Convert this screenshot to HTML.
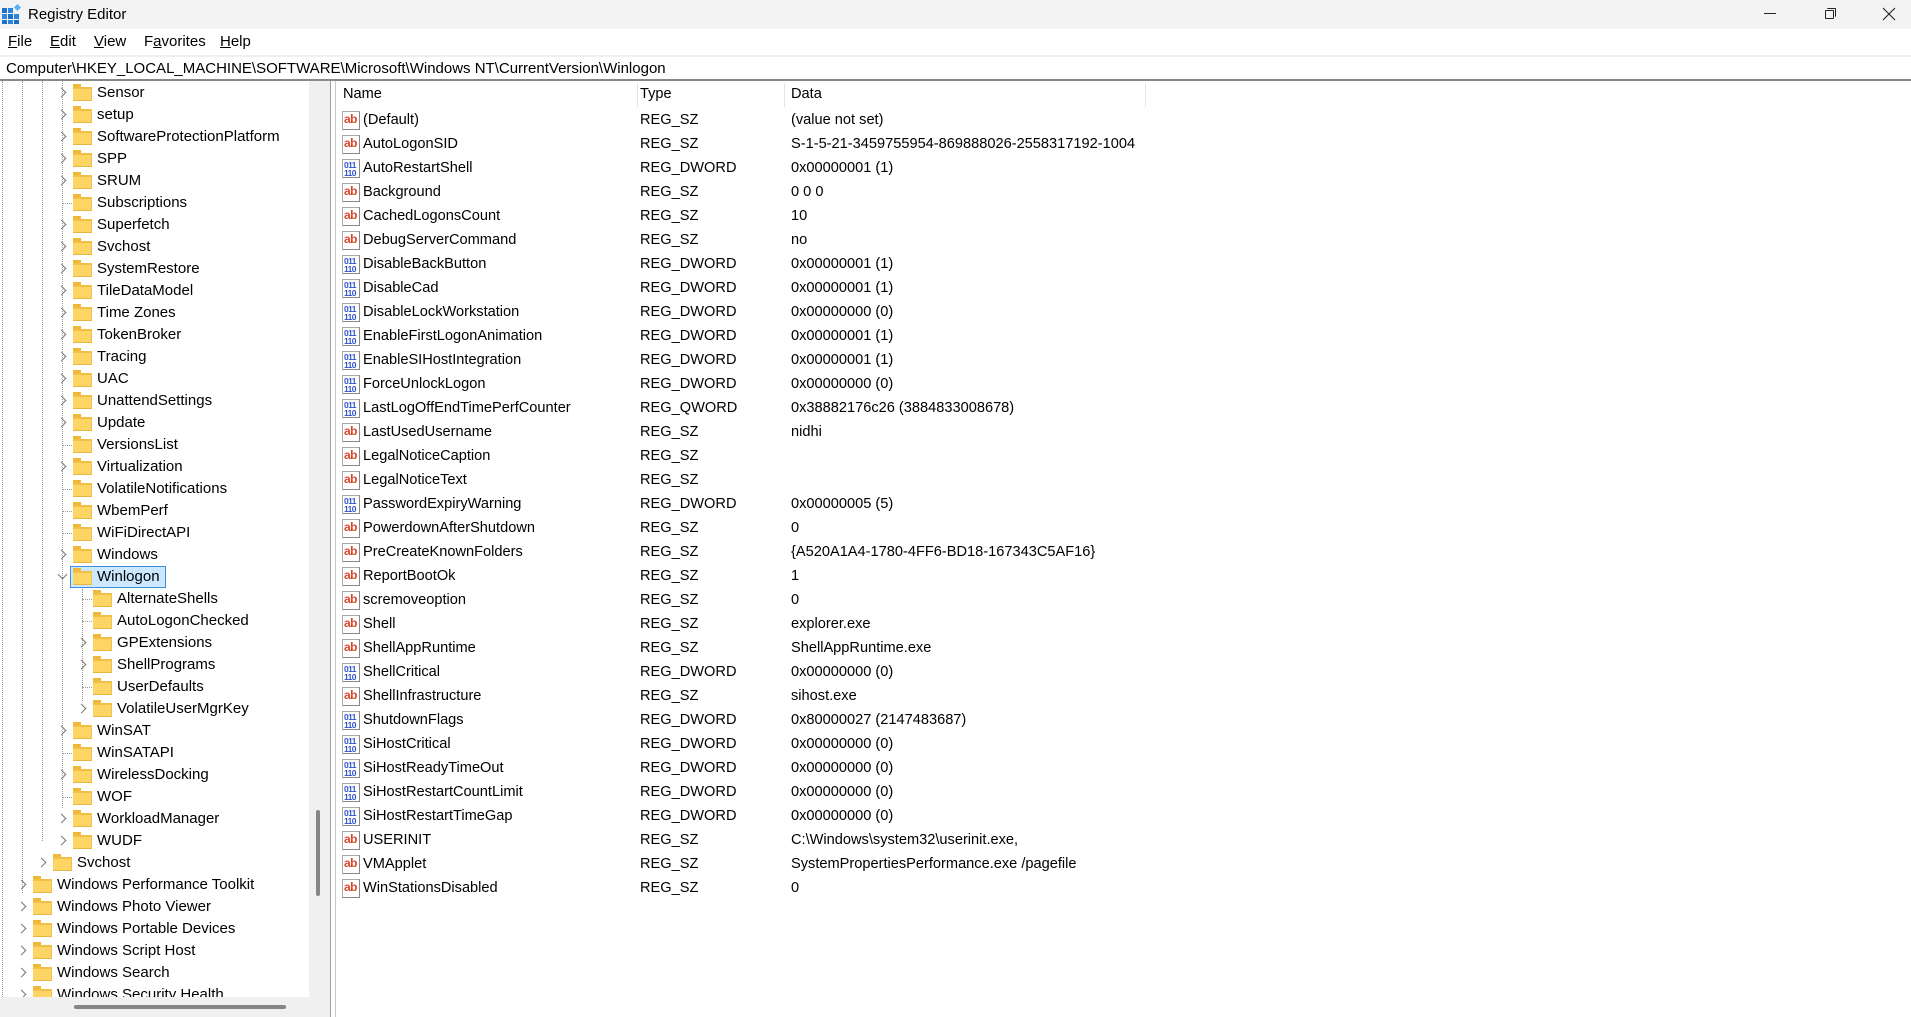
<!DOCTYPE html>
<html><head><meta charset="utf-8"><style>
*{margin:0;padding:0;box-sizing:border-box}
body{width:1911px;height:1017px;overflow:hidden;background:#fff;font-family:"Liberation Sans",sans-serif;font-size:14.6px;color:#000;position:relative}
.abs{position:absolute}
#title{left:0;top:0;width:1911px;height:29px;background:#f3f3f3}
#menu{left:0;top:29px;width:1911px;height:24px;background:#fff}
#menu span{position:absolute;top:4px;font-size:15px}
#addr{left:0;top:55px;width:1911px;height:24px;background:#fff;border-top:2px solid #f0f0f0}
#addrline{left:0;top:79px;width:1911px;height:2px;background:#888}
#tree{left:0;top:81px;width:309px;height:916px;overflow:hidden;background:#fff;font-size:15px}
.t{position:absolute;left:0;height:22px;width:400px;line-height:22px}
.t .c{position:absolute;left:calc(var(--l) - 4px);top:7px;width:7px;height:7px;border-right:1.3px solid #777;border-top:1.3px solid #777;transform:rotate(45deg)}
.t .c.o{transform:rotate(135deg);top:5px;left:calc(var(--l) - 3px)}
.t .d{position:absolute;left:var(--l);top:11px;width:10px;border-top:1px dotted #999}
.t .f{position:absolute;left:calc(var(--l) + 11px);top:5px;width:19px;height:14px;background:#fcd565;border-bottom:1px solid #e9b640;border-right:1px solid #eec055}
.t .f:before{content:"";position:absolute;left:0;top:-3px;width:8px;height:3px;background:#efb838}
.t .f:after{content:"";position:absolute;left:0;top:0;width:18px;height:2px;background:#f2bf45}
.t span{position:absolute;left:calc(var(--l) + 35px);top:0;white-space:nowrap}
.v{position:absolute;width:0;border-left:1px dotted #999}
.sel{position:absolute;left:70px;width:96px;height:22px;background:#cce8ff;border:1px solid #3d8fdb}
#vtrack{left:309px;top:81px;width:21px;height:936px;background:#f0f0f0}
#vthumb{left:316px;top:810px;width:4px;height:86px;background:#858585;border-radius:2px}
#htrack{left:0;top:997px;width:309px;height:20px;background:#f0f0f0}
#hthumb{left:74px;top:1005px;width:212px;height:4px;background:#858585;border-radius:2px}
#split1{left:330px;top:81px;width:1px;height:936px;background:#a0a0a0}
#split2{left:335px;top:81px;width:1px;height:936px;background:#c8c8c8}
.hd{position:absolute;top:86px}
.cd{position:absolute;top:83px;width:1px;height:24px;background:#e5e5e5}
.r{position:absolute;left:0;height:24px;width:1600px;line-height:24px;white-space:nowrap}
.r .n{position:absolute;left:363px}
.r .y{position:absolute;left:640px}
.r .a{position:absolute;left:791px}
.ic{position:absolute;left:342px;top:3px;width:18px;height:19px;border:1px solid #aaa;border-right-color:#888;border-bottom-color:#888;background:#fff;overflow:hidden;font-style:normal}
.ab:after{content:"ab";position:absolute;left:1px;top:-5px;font-size:12px;font-weight:bold;color:#d9452b;letter-spacing:-0.5px}
.bn b{position:absolute;left:1px;font-size:8.5px;line-height:8px;font-weight:bold;color:#2e56c7;letter-spacing:-0.6px}
</style></head><body>
<div id="title" class="abs">
<svg class="abs" style="left:2px;top:4px" width="20" height="20" viewBox="0 0 20 20"><rect x="0" y="4" width="5" height="5" fill="#1f6fc8"/><rect x="6" y="4" width="5" height="5" fill="#2b86e0"/><rect x="0" y="10" width="5" height="5" fill="#2b86e0"/><rect x="6" y="10" width="5" height="5" fill="#1f6fc8"/><rect x="12" y="10" width="5" height="5" fill="#2b86e0"/><rect x="0" y="16" width="5" height="4" fill="#1f6fc8"/><rect x="6" y="16" width="5" height="4" fill="#2b86e0"/><rect x="12" y="16" width="5" height="4" fill="#1f6fc8"/><rect x="13" y="1" width="5" height="5" fill="#5fb0f0" transform="rotate(45 15.5 3.5)"/></svg>
<span class="abs" style="left:28px;top:6px;font-size:15px">Registry Editor</span>
<div class="abs" style="left:1764px;top:13px;width:12px;height:1px;background:#222"></div>
<div class="abs" style="left:1825px;top:10px;width:9px;height:9px;border:1px solid #222;border-radius:1px"></div>
<div class="abs" style="left:1827px;top:8px;width:9px;height:9px;border-top:1px solid #222;border-right:1px solid #222;border-radius:1px"></div>
<svg class="abs" style="left:1882px;top:7px" width="14" height="14"><path d="M1 1L13 13M13 1L1 13" stroke="#222" stroke-width="1.1"/></svg>
</div>
<div id="menu" class="abs">
<span style="left:8px"><u>F</u>ile</span><span style="left:50px"><u>E</u>dit</span><span style="left:94px"><u>V</u>iew</span><span style="left:144px">F<u>a</u>vorites</span><span style="left:220px"><u>H</u>elp</span>
</div>
<div id="addr" class="abs"><span class="abs" style="left:6px;top:3px;font-size:15px">Computer\HKEY_LOCAL_MACHINE\SOFTWARE\Microsoft\Windows NT\CurrentVersion\Winlogon</span></div>
<div id="addrline" class="abs"></div>

<div id="tree" class="abs">
<div class="v" style="left:2px;top:0;height:916px"></div>
<div class="v" style="left:22px;top:0;height:812px"></div>
<div class="v" style="left:42px;top:0;height:760px"></div>
<div class="v" style="left:62px;top:0;height:727px"></div>
<div class="v" style="left:82px;top:508px;height:112px"></div>
<div class="sel" style="top:485px"></div>
<div class="t" style="top:1px;--l:62px"><i class="c"></i><b class="f"></b><span>Sensor</span></div>
<div class="t" style="top:23px;--l:62px"><i class="c"></i><b class="f"></b><span>setup</span></div>
<div class="t" style="top:45px;--l:62px"><i class="c"></i><b class="f"></b><span>SoftwareProtectionPlatform</span></div>
<div class="t" style="top:67px;--l:62px"><i class="c"></i><b class="f"></b><span>SPP</span></div>
<div class="t" style="top:89px;--l:62px"><i class="c"></i><b class="f"></b><span>SRUM</span></div>
<div class="t" style="top:111px;--l:62px"><i class="d"></i><b class="f"></b><span>Subscriptions</span></div>
<div class="t" style="top:133px;--l:62px"><i class="c"></i><b class="f"></b><span>Superfetch</span></div>
<div class="t" style="top:155px;--l:62px"><i class="c"></i><b class="f"></b><span>Svchost</span></div>
<div class="t" style="top:177px;--l:62px"><i class="c"></i><b class="f"></b><span>SystemRestore</span></div>
<div class="t" style="top:199px;--l:62px"><i class="c"></i><b class="f"></b><span>TileDataModel</span></div>
<div class="t" style="top:221px;--l:62px"><i class="c"></i><b class="f"></b><span>Time Zones</span></div>
<div class="t" style="top:243px;--l:62px"><i class="c"></i><b class="f"></b><span>TokenBroker</span></div>
<div class="t" style="top:265px;--l:62px"><i class="c"></i><b class="f"></b><span>Tracing</span></div>
<div class="t" style="top:287px;--l:62px"><i class="c"></i><b class="f"></b><span>UAC</span></div>
<div class="t" style="top:309px;--l:62px"><i class="c"></i><b class="f"></b><span>UnattendSettings</span></div>
<div class="t" style="top:331px;--l:62px"><i class="c"></i><b class="f"></b><span>Update</span></div>
<div class="t" style="top:353px;--l:62px"><i class="d"></i><b class="f"></b><span>VersionsList</span></div>
<div class="t" style="top:375px;--l:62px"><i class="c"></i><b class="f"></b><span>Virtualization</span></div>
<div class="t" style="top:397px;--l:62px"><i class="d"></i><b class="f"></b><span>VolatileNotifications</span></div>
<div class="t" style="top:419px;--l:62px"><i class="d"></i><b class="f"></b><span>WbemPerf</span></div>
<div class="t" style="top:441px;--l:62px"><i class="d"></i><b class="f"></b><span>WiFiDirectAPI</span></div>
<div class="t" style="top:463px;--l:62px"><i class="c"></i><b class="f"></b><span>Windows</span></div>
<div class="t" style="top:485px;--l:62px"><i class="c o"></i><b class="f"></b><span>Winlogon</span></div>
<div class="t" style="top:507px;--l:82px"><i class="d"></i><b class="f"></b><span>AlternateShells</span></div>
<div class="t" style="top:529px;--l:82px"><i class="d"></i><b class="f"></b><span>AutoLogonChecked</span></div>
<div class="t" style="top:551px;--l:82px"><i class="c"></i><b class="f"></b><span>GPExtensions</span></div>
<div class="t" style="top:573px;--l:82px"><i class="c"></i><b class="f"></b><span>ShellPrograms</span></div>
<div class="t" style="top:595px;--l:82px"><i class="d"></i><b class="f"></b><span>UserDefaults</span></div>
<div class="t" style="top:617px;--l:82px"><i class="c"></i><b class="f"></b><span>VolatileUserMgrKey</span></div>
<div class="t" style="top:639px;--l:62px"><i class="c"></i><b class="f"></b><span>WinSAT</span></div>
<div class="t" style="top:661px;--l:62px"><i class="d"></i><b class="f"></b><span>WinSATAPI</span></div>
<div class="t" style="top:683px;--l:62px"><i class="c"></i><b class="f"></b><span>WirelessDocking</span></div>
<div class="t" style="top:705px;--l:62px"><i class="d"></i><b class="f"></b><span>WOF</span></div>
<div class="t" style="top:727px;--l:62px"><i class="c"></i><b class="f"></b><span>WorkloadManager</span></div>
<div class="t" style="top:749px;--l:62px"><i class="c"></i><b class="f"></b><span>WUDF</span></div>
<div class="t" style="top:771px;--l:42px"><i class="c"></i><b class="f"></b><span>Svchost</span></div>
<div class="t" style="top:793px;--l:22px"><i class="c"></i><b class="f"></b><span>Windows Performance Toolkit</span></div>
<div class="t" style="top:815px;--l:22px"><i class="c"></i><b class="f"></b><span>Windows Photo Viewer</span></div>
<div class="t" style="top:837px;--l:22px"><i class="c"></i><b class="f"></b><span>Windows Portable Devices</span></div>
<div class="t" style="top:859px;--l:22px"><i class="c"></i><b class="f"></b><span>Windows Script Host</span></div>
<div class="t" style="top:881px;--l:22px"><i class="c"></i><b class="f"></b><span>Windows Search</span></div>
<div class="t" style="top:903px;--l:22px"><i class="c"></i><b class="f"></b><span>Windows Security Health</span></div>
</div>
<div id="vtrack" class="abs"></div><div id="vthumb" class="abs"></div>
<div id="htrack" class="abs"></div><div id="hthumb" class="abs"></div>
<div id="split1" class="abs"></div><div id="split2" class="abs"></div>

<span class="hd" style="left:343px">Name</span><span class="hd" style="left:640px">Type</span><span class="hd" style="left:791px">Data</span>
<div class="cd" style="left:637px"></div><div class="cd" style="left:784px"></div><div class="cd" style="left:1145px"></div>

<div class="r" style="top:108px"><i class="ic ab"></i><span class="n">(Default)</span><span class="y">REG_SZ</span><span class="a">(value not set)</span></div>
<div class="r" style="top:132px"><i class="ic ab"></i><span class="n">AutoLogonSID</span><span class="y">REG_SZ</span><span class="a">S-1-5-21-3459755954-869888026-2558317192-1004</span></div>
<div class="r" style="top:156px"><i class="ic bn"><b style="top:1px">011</b><b style="top:9px">110</b></i><span class="n">AutoRestartShell</span><span class="y">REG_DWORD</span><span class="a">0x00000001 (1)</span></div>
<div class="r" style="top:180px"><i class="ic ab"></i><span class="n">Background</span><span class="y">REG_SZ</span><span class="a">0 0 0</span></div>
<div class="r" style="top:204px"><i class="ic ab"></i><span class="n">CachedLogonsCount</span><span class="y">REG_SZ</span><span class="a">10</span></div>
<div class="r" style="top:228px"><i class="ic ab"></i><span class="n">DebugServerCommand</span><span class="y">REG_SZ</span><span class="a">no</span></div>
<div class="r" style="top:252px"><i class="ic bn"><b style="top:1px">011</b><b style="top:9px">110</b></i><span class="n">DisableBackButton</span><span class="y">REG_DWORD</span><span class="a">0x00000001 (1)</span></div>
<div class="r" style="top:276px"><i class="ic bn"><b style="top:1px">011</b><b style="top:9px">110</b></i><span class="n">DisableCad</span><span class="y">REG_DWORD</span><span class="a">0x00000001 (1)</span></div>
<div class="r" style="top:300px"><i class="ic bn"><b style="top:1px">011</b><b style="top:9px">110</b></i><span class="n">DisableLockWorkstation</span><span class="y">REG_DWORD</span><span class="a">0x00000000 (0)</span></div>
<div class="r" style="top:324px"><i class="ic bn"><b style="top:1px">011</b><b style="top:9px">110</b></i><span class="n">EnableFirstLogonAnimation</span><span class="y">REG_DWORD</span><span class="a">0x00000001 (1)</span></div>
<div class="r" style="top:348px"><i class="ic bn"><b style="top:1px">011</b><b style="top:9px">110</b></i><span class="n">EnableSIHostIntegration</span><span class="y">REG_DWORD</span><span class="a">0x00000001 (1)</span></div>
<div class="r" style="top:372px"><i class="ic bn"><b style="top:1px">011</b><b style="top:9px">110</b></i><span class="n">ForceUnlockLogon</span><span class="y">REG_DWORD</span><span class="a">0x00000000 (0)</span></div>
<div class="r" style="top:396px"><i class="ic bn"><b style="top:1px">011</b><b style="top:9px">110</b></i><span class="n">LastLogOffEndTimePerfCounter</span><span class="y">REG_QWORD</span><span class="a">0x38882176c26 (3884833008678)</span></div>
<div class="r" style="top:420px"><i class="ic ab"></i><span class="n">LastUsedUsername</span><span class="y">REG_SZ</span><span class="a">nidhi</span></div>
<div class="r" style="top:444px"><i class="ic ab"></i><span class="n">LegalNoticeCaption</span><span class="y">REG_SZ</span><span class="a"></span></div>
<div class="r" style="top:468px"><i class="ic ab"></i><span class="n">LegalNoticeText</span><span class="y">REG_SZ</span><span class="a"></span></div>
<div class="r" style="top:492px"><i class="ic bn"><b style="top:1px">011</b><b style="top:9px">110</b></i><span class="n">PasswordExpiryWarning</span><span class="y">REG_DWORD</span><span class="a">0x00000005 (5)</span></div>
<div class="r" style="top:516px"><i class="ic ab"></i><span class="n">PowerdownAfterShutdown</span><span class="y">REG_SZ</span><span class="a">0</span></div>
<div class="r" style="top:540px"><i class="ic ab"></i><span class="n">PreCreateKnownFolders</span><span class="y">REG_SZ</span><span class="a">{A520A1A4-1780-4FF6-BD18-167343C5AF16}</span></div>
<div class="r" style="top:564px"><i class="ic ab"></i><span class="n">ReportBootOk</span><span class="y">REG_SZ</span><span class="a">1</span></div>
<div class="r" style="top:588px"><i class="ic ab"></i><span class="n">scremoveoption</span><span class="y">REG_SZ</span><span class="a">0</span></div>
<div class="r" style="top:612px"><i class="ic ab"></i><span class="n">Shell</span><span class="y">REG_SZ</span><span class="a">explorer.exe</span></div>
<div class="r" style="top:636px"><i class="ic ab"></i><span class="n">ShellAppRuntime</span><span class="y">REG_SZ</span><span class="a">ShellAppRuntime.exe</span></div>
<div class="r" style="top:660px"><i class="ic bn"><b style="top:1px">011</b><b style="top:9px">110</b></i><span class="n">ShellCritical</span><span class="y">REG_DWORD</span><span class="a">0x00000000 (0)</span></div>
<div class="r" style="top:684px"><i class="ic ab"></i><span class="n">ShellInfrastructure</span><span class="y">REG_SZ</span><span class="a">sihost.exe</span></div>
<div class="r" style="top:708px"><i class="ic bn"><b style="top:1px">011</b><b style="top:9px">110</b></i><span class="n">ShutdownFlags</span><span class="y">REG_DWORD</span><span class="a">0x80000027 (2147483687)</span></div>
<div class="r" style="top:732px"><i class="ic bn"><b style="top:1px">011</b><b style="top:9px">110</b></i><span class="n">SiHostCritical</span><span class="y">REG_DWORD</span><span class="a">0x00000000 (0)</span></div>
<div class="r" style="top:756px"><i class="ic bn"><b style="top:1px">011</b><b style="top:9px">110</b></i><span class="n">SiHostReadyTimeOut</span><span class="y">REG_DWORD</span><span class="a">0x00000000 (0)</span></div>
<div class="r" style="top:780px"><i class="ic bn"><b style="top:1px">011</b><b style="top:9px">110</b></i><span class="n">SiHostRestartCountLimit</span><span class="y">REG_DWORD</span><span class="a">0x00000000 (0)</span></div>
<div class="r" style="top:804px"><i class="ic bn"><b style="top:1px">011</b><b style="top:9px">110</b></i><span class="n">SiHostRestartTimeGap</span><span class="y">REG_DWORD</span><span class="a">0x00000000 (0)</span></div>
<div class="r" style="top:828px"><i class="ic ab"></i><span class="n">USERINIT</span><span class="y">REG_SZ</span><span class="a">C:\Windows\system32\userinit.exe,</span></div>
<div class="r" style="top:852px"><i class="ic ab"></i><span class="n">VMApplet</span><span class="y">REG_SZ</span><span class="a">SystemPropertiesPerformance.exe /pagefile</span></div>
<div class="r" style="top:876px"><i class="ic ab"></i><span class="n">WinStationsDisabled</span><span class="y">REG_SZ</span><span class="a">0</span></div>
</body></html>
